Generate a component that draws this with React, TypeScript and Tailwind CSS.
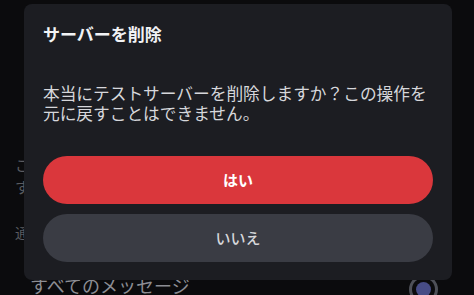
export default function App() {
  return (
    <div className="relative w-[474px] h-[295px] overflow-hidden bg-[#0b0b0d] font-['Noto_Sans_CJK_JP',sans-serif]">
      {/* page under the modal */}
      <div className="flex flex-col pl-[15px] pr-[36px] pt-[154px]">
        <p className="text-[15px] leading-[22px] text-[#5a5b60]">この</p>
        <p className="text-[15px] leading-[22px] text-[#5a5b60]">すべ</p>
        <p className="mt-[24px] text-[14px] leading-[20px] text-[#5a5b60]">通知</p>
        <div className="mt-[31px] flex items-start justify-between pl-[15px]">
          <span className="text-[18px] leading-[24px] text-[#8c8d93]">すべてのメッセージ</span>
          <span className="mt-[2px] flex size-[29px] items-center justify-center rounded-full border-[3px] border-[#4e5058]">
            <span className="size-[15px] rounded-full bg-[#474c86]" />
          </span>
        </div>
      </div>

      {/* modal */}
      <div className="absolute left-[24px] top-[4px] flex h-[276px] w-[428px] flex-col rounded-[8px] bg-[#1c1d22] px-[19px] pt-[17px] pb-[18px]">
        <h2 className="text-[17px] leading-[26px] font-bold text-[#f2f3f5]">サーバーを削除</h2>
        <p className="mt-[37px] text-[16.7px] leading-[19.5px] text-[#d6d7db]">
          本当にテストサーバーを削除しますか？この操作を元に戻すことはできません。
        </p>
        <div className="mt-auto flex flex-col gap-[10px]">
          <button className="h-[48px] w-full rounded-full bg-[#da373c] text-[15px] font-bold text-white">
            はい
          </button>
          <button className="h-[48px] w-full rounded-full bg-[#3a3c44] text-[15px] font-medium text-[#d6d7db]">
            いいえ
          </button>
        </div>
      </div>
    </div>
  );
}
